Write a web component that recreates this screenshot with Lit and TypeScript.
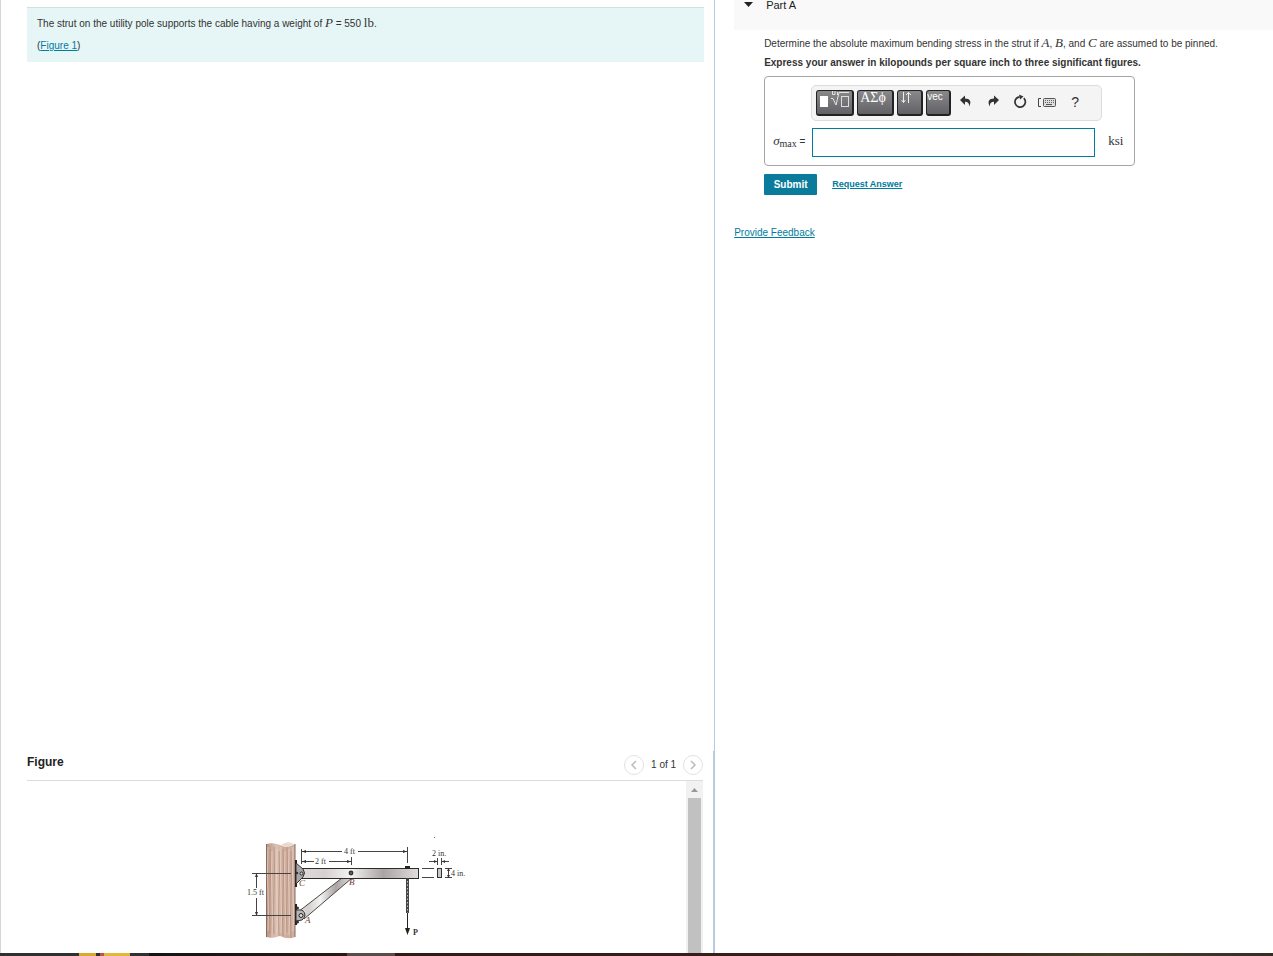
import { LitElement, html, css, svg } from "lit";
import { customElement, state } from "lit/decorators.js";

@customElement("strut-figure")
class StrutFigure extends LitElement {
  static styles = css`
    :host { display: block; }
    svg { display: block; }
    .label { font: 8px "Liberation Serif", "Times New Roman", serif; fill: #333; }
    .point { font-size: 9px; font-style: italic; fill: #6b3a2c; }
    .force { font-weight: bold; }
  `;

  render() {
    const grain = [268, 270, 272, 274, 277, 279, 281, 283, 285, 287, 289, 291, 293];
    return html`
      <svg width="222" height="106" viewBox="246 835 222 106" role="img" aria-label="Strut supported by a utility pole">
        <defs>
          <linearGradient id="steel" x1="0" x2="1">
            <stop offset="0" stop-color="#dedada" /><stop offset=".2" stop-color="#d6d1d1" />
            <stop offset=".42" stop-color="#f4f2f2" /><stop offset=".7" stop-color="#aaa4a4" />
            <stop offset="1" stop-color="#e2dede" />
          </linearGradient>
          <linearGradient id="wood" x1="0" x2="1">
            <stop offset="0" stop-color="#b89483" /><stop offset=".35" stop-color="#dcc2b3" />
            <stop offset=".6" stop-color="#cdac9c" /><stop offset="1" stop-color="#cfb0a0" />
          </linearGradient>
        </defs>
        <path d="M266.500 844 Q273 842 280 845 Q287 849 295 844 V937 Q288 940 280 936 Q273 939 266.500 937Z" fill="url(#wood)" />
        <path d="M281 845 Q287 840 294 844 Q287 849 281 845Z" fill="#ead9ce" />
        ${grain.map((x, i) => svg`<path d="M${x} ${847 + (i % 3) * 2} q${i % 2 ? 1 : -1} 24 0 46 t0 ${38 + (i % 4)}" fill="none" stroke=${i % 2 ? "#b08a79" : "#e9d5c9"} stroke-width=".7" />`)}
        <path d="M266.500 844V937M295 844V937" stroke="#8a6a5c" stroke-width="1" />
        <path d="M252 873.500H291M252 915.500H291M256.500 875V888M256.500 898V914" stroke="#444" fill="none" />
        <path d="M256.500 873l-1.500 4h3zM256.500 916l-1.500-4h3z" fill="#333" />
        <path d="M298 912 L342 878 L352 878 L304 919Z" fill="url(#steel)" stroke="#4a4646" />
        <rect x="301.500" y="868.500" width="117" height="10" fill="url(#steel)" stroke="#2e2a2a" />
        <path d="M295 860h2v27h-2zM295 904h2v21h-2z" fill="#222" />
        <path d="M296 863 L303 869 Q306 873 303 877 L296 884Z" fill="#aaa6a6" stroke="#333" />
        <path d="M296 910 L302 910 Q308 915 302 920 L296 921Z" fill="#bab6b6" stroke="#333" />
        <g fill="#ddd" stroke="#222"><circle cx="301.500" cy="873.500" r="1.500" /><circle cx="301" cy="915.500" r="2" /></g>
        <g fill="#333"><circle cx="297" cy="873" r="1.200" /><circle cx="351" cy="873" r="2.400" /><circle cx="297.500" cy="908" r="1.500" /><circle cx="297.500" cy="922" r="1.500" /></g>
        <circle cx="351" cy="873" r=".8" fill="#89a" />
        <path d="M301.500 849V864M407.500 847V863M351.500 857V865M302 851.500H342M358 851.500H407M302 861.500H314M329 861.500H351" fill="none" stroke="#444" />
        <path d="M302 851.500l4-1.500v3zM407 851.500l-4-1.500v3zM302 861.500l4-1.500v3zM351 861.500l-4-1.500v3z" fill="#333" />
        <rect x="405" y="866" width="5" height="3" fill="#222" />
        <path d="M407.500 878V913" stroke="#444" stroke-width="3" />
        <path d="M407.500 881V913" stroke="#bbb" stroke-width="1" stroke-dasharray="1.500 2" />
        <path d="M407.500 913V930" stroke="#222" />
        <path d="M407.500 935l-2.500-7h5z" fill="#222" />
        <path d="M422 868.500H434M422 877.500H434M429 861.500H437M442 861.500H449M437.500 858V865M441.500 858V865M445 868.500H452M445 877.500H452M448.500 869V877" stroke="#444" />
        <path d="M437 861.500l-3-1.500v3zM442 861.500l3-1.500v3zM448.500 868l-1.500 3h3zM448.500 878l-1.500-3h3z" fill="#333" />
        <rect x="437.500" y="868.500" width="4" height="9" fill="#ccc7c7" stroke="#333" />
        <rect x="434" y="837" width="1" height="1" fill="#777" />
        <text class="label" x="247" y="895">1.5 ft</text>
        <text class="label" x="344" y="854">4 ft</text>
        <text class="label" x="315" y="864">2 ft</text>
        <text class="label" x="432" y="856">2 in.</text>
        <text class="label" x="451" y="876">4 in.</text>
        <text class="label point" x="299" y="886">C</text>
        <text class="label point" x="349" y="885">B</text>
        <text class="label point" x="305" y="923">A</text>
        <text class="label force" x="413" y="935">P</text>
      </svg>
    `;
  }
}

@customElement("answer-toolbar")
class AnswerToolbar extends LitElement {
  static styles = css`
    :host { display: flex; align-items: flex-start; box-sizing: border-box; height: 36px; padding: 4px; border: 1px solid #dcdcdc; border-radius: 5px; background: #f4f4f4; }
    button { display: block; margin: 0; padding: 0; border: 0; background: none; color: #333; }
    .keys { display: flex; gap: 3px; }
    .key { display: flex; justify-content: flex-start; align-items: flex-start; box-sizing: border-box; height: 26px; border: 1px solid #222; border-right-width: 2px; border-bottom-width: 2px; border-radius: 3px; background: linear-gradient(#89898c, #626266); color: #fff; overflow: hidden; }
    .wide { width: 38px; }
    .medium { width: 37px; padding-left: 2px; font: 14px/14px "Liberation Serif", serif; }
    .narrow { width: 26px; }
    .vec { width: 25px; font: 10px/11px "Liberation Sans", Arial, sans-serif; }
    .tools { display: flex; align-items: center; gap: 7px; height: 24px; padding-left: 6px; }
    .tool { width: 20px; height: 20px; }
    .help { font: 14px/20px "Liberation Sans", Arial, sans-serif; }
    svg { display: block; }
  `;

  render() {
    return html`
      <div class="keys">
        <button class="key wide" aria-label="Templates">
          <svg width="34" height="22" viewBox="0 0 34 22"><rect x="3" y="5" width="8" height="11" fill="#fff" /><path d="M14 7.500h2l3 6.500 3-12.500H32M15.500 0v3.500h2.500V0M20.500 4V1" fill="none" stroke="#e4e4e4" /><rect x="24.500" y="5.500" width="7" height="10" fill="none" stroke="#ddd" /></svg>
        </button>
        <button class="key medium" aria-label="Greek letters">ΑΣϕ</button>
        <button class="key narrow" aria-label="Arrows">
          <svg width="22" height="22" viewBox="0 0 22 22"><path d="M5.500 1V11.500M3.500 9l2 2.500 2-2.500M10.500 12V1.500M8 4l2.500-2.500L13 4" fill="none" stroke="#eee" /></svg>
        </button>
        <button class="key vec">vec</button>
      </div>
      <div class="tools">
        <button class="tool" aria-label="Undo"><svg width="20" height="20" viewBox="0 0 20 20"><path d="M3 8l5-4.500v3c5 0 7 3 4 8 .4-3.200-1-4.700-4-4.700V13z" fill="#333" /></svg></button>
        <button class="tool" aria-label="Redo"><svg width="20" height="20" viewBox="0 0 20 20"><path d="M15 8l-5-4.500v3c-5 0-7 3-4 8-.4-3.200 1-4.700 4-4.700V13z" fill="#333" /></svg></button>
        <button class="tool" aria-label="Reset"><svg width="20" height="20" viewBox="0 0 20 20"><path d="M12.800 6.200A5.200 5.200 0 1 1 8.500 4.800" fill="none" stroke="#333" stroke-width="1.700" /><path d="M8 2.500l4.500 2-3.500 3z" fill="#333" /></svg></button>
        <button class="tool" aria-label="Keyboard shortcuts"><svg width="20" height="20" viewBox="0 0 20 20"><path d="M3 6.500H.500v8H3" fill="none" stroke="#444" /><rect x="5.500" y="6.500" width="12" height="8" rx="1" fill="#ddd" stroke="#555" /><path d="M7 8.500h10M7 10.500h10" stroke="#666" stroke-dasharray="1 1" /><path d="M8 12.500h6" stroke="#555" /></svg></button>
        <button class="tool help" aria-label="Help">?</button>
      </div>
    `;
  }
}

@customElement("app-root")
class AppRoot extends LitElement {
  @state() private open = true;

  static styles = css`
    :host { display: flex; flex-direction: column; min-height: 100vh; background: #fff; color: #333; font: 10px/14px "Liberation Sans", Arial, sans-serif; }
    * { box-sizing: border-box; }
    p, h2 { margin: 0; }
    button { margin: 0; padding: 0; border: 0; background: none; color: inherit; font: inherit; }
    a { color: #007c9e; }
    .panes { flex: 1; display: grid; grid-template-columns: 561fr 439fr; }
    .left { display: flex; flex-direction: column; justify-content: space-between; padding-top: 7px; border-left: 1px solid #d5d5d5; }
    .problem { display: flex; flex-direction: column; gap: 6px; margin: 0 10px 0 26px; padding: 8px 10px; border-top: 1px solid #cfe0e0; background: #e6f6f6; }
    .problem p { line-height: 16px; }
    .math { font: 13px/14px "Liberation Serif", "Times New Roman", serif; }
    .var { font-style: italic; }
    .figure { padding: 0 10px 0 26px; border-right: 1px solid #b9cde0; }
    .figure-head { display: flex; justify-content: space-between; align-items: center; height: 30px; padding-bottom: 2px; border-bottom: 1px solid #dcdcdc; }
    .figure-title { padding-bottom: 6px; color: #222; font-size: 12px; line-height: 16px; }
    .pager { display: flex; align-items: center; gap: 7px; }
    .round { width: 20px; height: 20px; border: 1px solid #e2e2e2; border-radius: 50%; background: #fff; }
    .round svg { display: block; margin: auto; }
    .viewer { display: flex; height: 172px; }
    .canvas { flex: 1; display: flex; justify-content: center; padding-top: 54px; }
    .scroll { display: flex; flex-direction: column; align-items: center; width: 17px; background: #f1f1f1; }
    .scroll-arrow { height: 17px; display: block; }
    .thumb { flex: 1; width: 13px; background: #c1c1c1; }
    .right { border-left: 1px solid #b3c9de; padding-left: 19px; }
    .part-head { display: flex; height: 30px; padding-left: 10px; background: #f9f9f9; }
    .caret { display: flex; align-items: flex-start; gap: 12px; height: 12px; color: #222; font-size: 11px; line-height: 11px; }
    .part { padding: 6px 30px 0; }
    .instruction { margin-top: 5px; font-weight: bold; }
    .answer { width: fit-content; margin-top: 6px; padding: 8px 11px 8px 8px; border: 1px solid #a5a5a5; border-radius: 4px; }
    .answer-grid { display: grid; grid-template-columns: 39px 283px auto; row-gap: 7px; align-items: center; }
    .toolbar { grid-column: 2 / 4; width: 291px; margin-left: -1px; }
    .sub { font-size: 10px; vertical-align: -2px; }
    .answer-input { width: 283px; height: 29px; padding: 4px 6px; border: 1px solid #007c9e; background: #fff; font: 14px/18px "Liberation Sans", Arial, sans-serif; }
    .unit { padding: 0 0 3px 13px; }
    .actions { display: flex; align-items: center; gap: 15px; margin-top: 8px; }
    .submit { width: 53px; height: 21px; border-radius: 1px; background: #0b7b9b; color: #fff; font-weight: bold; }
    .request { padding-bottom: 2px; font-size: 9px; font-weight: bold; }
    .feedback { display: inline-block; margin-top: 31px; }
    .taskbar { height: 3px; background: linear-gradient(90deg, #303030 79px, #d9a836 79px 96px, #303030 96px 100px, #b55a4a 100px 104px, #e5b63c 104px 130px, #303030 130px 149px, #161314 149px, #2b1813 347px, #5b4a47 347px 395px, #321b16 395px, #3b2018 75%, #45402a 87%, #3b2a24); }
  `;

  render() {
    return html`
      <main class="panes">
        <section class="left">
          <div class="problem">
            <p>The strut on the utility pole supports the cable having a weight of <span class="math var">P</span> = 550 <span class="math">lb</span>.</p>
            <p>(<a href="#figure">Figure 1</a>)</p>
          </div>
          <section class="figure" id="figure">
            <header class="figure-head">
              <h2 class="figure-title">Figure</h2>
              <nav class="pager" aria-label="Figures">
                <button class="round" aria-label="Previous figure"><svg width="8" height="10" viewBox="0 0 8 10"><path d="M6 1L2 5l4 4" fill="none" stroke="#bbb" stroke-width="1.500" /></svg></button>
                <span>1 of 1</span>
                <button class="round" aria-label="Next figure"><svg width="8" height="10" viewBox="0 0 8 10"><path d="M2 1l4 4-4 4" fill="none" stroke="#bbb" stroke-width="1.500" /></svg></button>
              </nav>
            </header>
            <div class="viewer">
              <div class="canvas"><strut-figure></strut-figure></div>
              <div class="scroll">
                <svg class="scroll-arrow" width="17" height="17" viewBox="0 0 17 17"><path d="M5 11l3.500-4 3.500 4z" fill="#999" /></svg>
                <div class="thumb"></div>
              </div>
            </div>
          </section>
        </section>
        <section class="right">
          <header class="part-head">
            <button class="caret" aria-expanded=${this.open} @click=${() => (this.open = !this.open)}>
              <svg width="10" height="8" viewBox="0 0 10 8"><path d="M0 2h9L4.500 7z" fill="#222" /></svg>
              <span>Part A</span>
            </button>
          </header>
          ${this.open ? html`
            <div class="part">
              <p>Determine the absolute maximum bending stress in the strut if <span class="math var">A</span>, <span class="math var">B</span>, and <span class="math var">C</span> are assumed to be pinned.</p>
              <p class="instruction">Express your answer in kilopounds per square inch to three significant figures.</p>
              <div class="answer">
                <div class="answer-grid">
                  <answer-toolbar class="toolbar"></answer-toolbar>
                  <label for="stress"><span class="math"><i>σ</i><span class="sub">max</span></span> =</label>
                  <input class="answer-input" id="stress" type="text" />
                  <span class="math unit">ksi</span>
                </div>
              </div>
              <div class="actions">
                <button class="submit">Submit</button>
                <a class="request" href="#answer">Request Answer</a>
              </div>
            </div>` : ""}
          <a class="feedback" href="#feedback">Provide Feedback</a>
        </section>
      </main>
      <footer class="taskbar"></footer>
    `;
  }
}
